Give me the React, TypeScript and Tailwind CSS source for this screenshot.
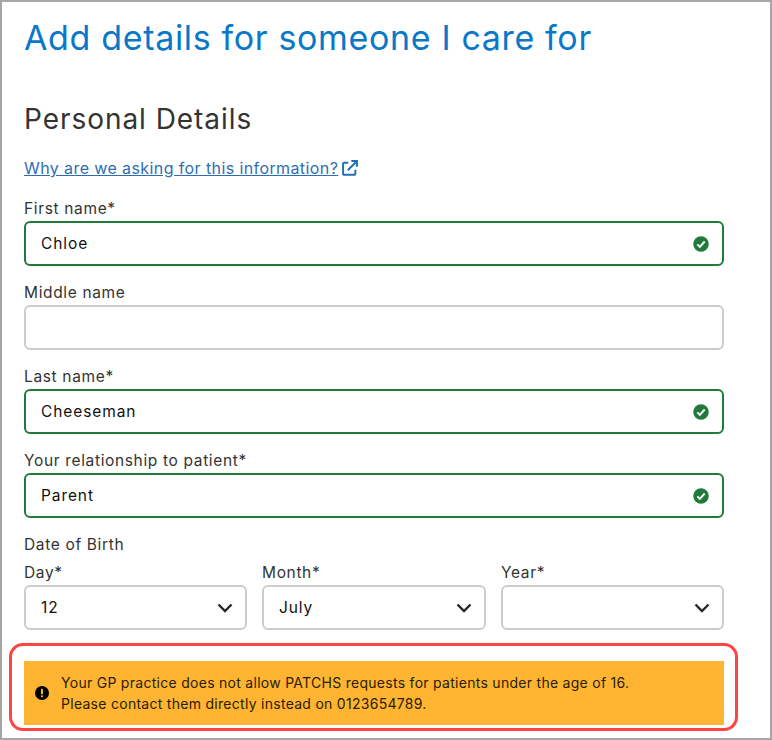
import React from "react";

const font = { fontFamily: '"Inter", "Liberation Sans", sans-serif' };

function Check() {
  return (
    <svg viewBox="0 0 512 512" className="w-4 h-4 shrink-0" aria-hidden="true">
      <circle cx="256" cy="256" r="248" fill="#1e7b3a" />
      <path d="M140 268l78 78 156-170" fill="none" stroke="#fff" strokeWidth="62" />
    </svg>
  );
}

function Chevron() {
  return (
    <svg viewBox="0 0 16 10" className="w-[16px] h-[10px] shrink-0" aria-hidden="true">
      <path d="M1.5 1.5L8 8l6.5-6.5" fill="none" stroke="#23272e" strokeWidth="2.4" />
    </svg>
  );
}

function Field({ label, value }: { label: string; value?: string }) {
  return (
    <div className="flex flex-col">
      <div className="h-[28px] pt-[5px] text-[15.5px] leading-[22px] text-[#333] tracking-[0.65px]">{label}</div>
      <div
        className={`h-[45px] w-[700px] rounded-[6px] border-2 bg-white pl-[15px] pr-[13px] flex items-center justify-between text-[15.5px] text-[#111] ${
          value ? "border-[#1e7b3a]" : "border-[#cccccc]"
        }`}
      >
        <span className="tracking-[0.9px]">{value}</span>
        {value ? <Check /> : null}
      </div>
    </div>
  );
}

function SelectBox({ label, value, w }: { label: string; value?: string; w: string }) {
  return (
    <div className={`flex flex-col ${w}`}>
      <div className="h-[28px] pt-[5px] text-[15.5px] leading-[22px] text-[#333] tracking-[0.65px]">{label}</div>
      <div className="h-[45px] rounded-[6px] border-2 border-[#cccccc] bg-white pl-[15px] pr-[12px] flex items-center justify-between text-[15.5px] text-[#111]">
        <span className="tracking-[0.9px]">{value}</span>
        <Chevron />
      </div>
    </div>
  );
}

export default function App() {
  return (
    <div style={font} className="w-[772px] h-[740px] bg-white border-2 border-[#a6a6a6] overflow-hidden pl-[22px]">
      <h1 className="mt-[14px] h-[44px] text-[34px] leading-[44px] font-normal text-[#0a78c8] tracking-[0.65px]">
        Add details for someone I care for
      </h1>
      <h2 className="mt-[40px] h-[38px] text-[28px] leading-[38px] font-normal text-[#333] tracking-[0.95px]">
        Personal Details
      </h2>
      <div className="mt-[17px] h-[26px] flex items-center gap-[4px] text-[#2f6db3]">
        <a className="underline text-[16px] leading-[24px] tracking-[0.4px]">Why are we asking for this information?</a>
        <svg viewBox="0 0 18 18" className="w-[16px] h-[16px]" aria-hidden="true">
          <path d="M7 3H2.5A1.2 1.2 0 0 0 1.2 4.2v11.3a1.2 1.2 0 0 0 1.3 1.2h11.3a1.2 1.2 0 0 0 1.2-1.2V11" fill="none" stroke="#1f6fb8" strokeWidth="2.2" />
          <path d="M6.5 11.5L15.5 2.5M10.5 1.2h6.3v6.3" fill="none" stroke="#1f6fb8" strokeWidth="2.2" />
        </svg>
      </div>
      <div className="mt-[12px] flex flex-col gap-[11px]">
        <Field label="First name*" value="Chloe" />
        <Field label="Middle name" />
        <Field label="Last name*" value="Cheeseman" />
        <Field label="Your relationship to patient*" value="Parent" />
      </div>
      <div className="mt-[14px] h-[25px] text-[15.5px] leading-[25px] text-[#333] tracking-[0.65px]">Date of Birth</div>
      <div className="flex gap-[15px] w-[700px]">
        <SelectBox label="Day*" value="12" w="w-[223px]" />
        <SelectBox label="Month*" value="July" w="w-[224px]" />
        <SelectBox label="Year*" w="w-[223px]" />
      </div>
      <div className="relative mt-[31px] h-[64px] w-[700px] bg-[#ffb531] flex items-center text-[14px] leading-[21px] text-[#2a1c00]">
        <div className="absolute -left-[15px] -top-[18px] w-[729px] h-[88px] rounded-[14px] border-[3px] border-[#ff4444]" />
        <svg viewBox="0 0 16 16" className="ml-[11px] w-[14px] h-[14px] shrink-0" aria-hidden="true">
          <circle cx="8" cy="8" r="8" fill="#000" />
          <rect x="6.9" y="3" width="2.2" height="6.5" rx="0.6" fill="#ffb531" />
          <rect x="6.9" y="10.7" width="2.2" height="2.2" rx="0.6" fill="#ffb531" />
        </svg>
        <div className="ml-[12px] tracking-[0.28px]">
          <div>Your GP practice does not allow PATCHS requests for patients under the age of 16.</div>
          <div>Please contact them directly instead on 0123654789.</div>
        </div>
      </div>
    </div>
  );
}
